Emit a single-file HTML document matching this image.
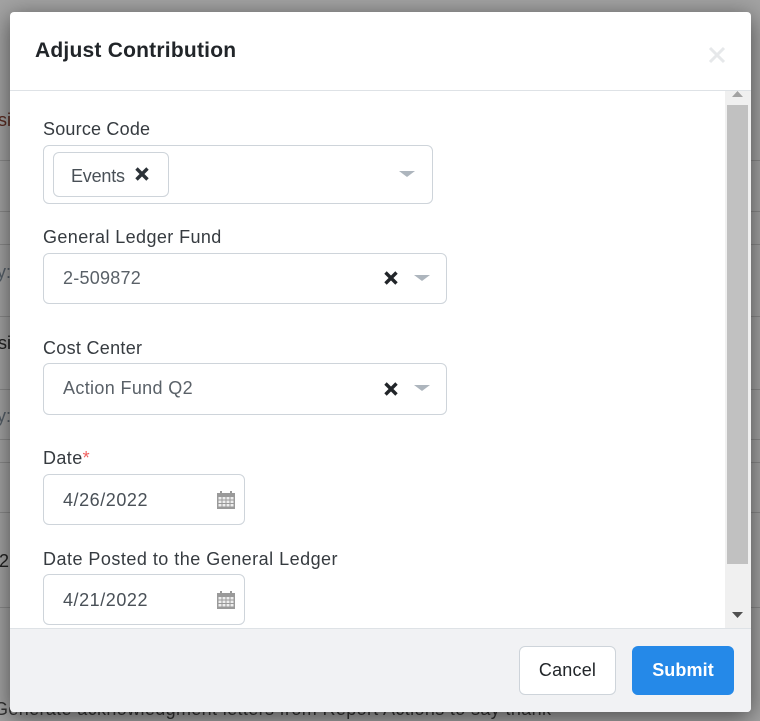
<!DOCTYPE html>
<html><head><meta charset="utf-8">
<style>
html,body{margin:0;padding:0}
body{width:760px;height:721px;overflow:hidden;position:relative;background:#a3a3a3;font-family:"Liberation Sans",sans-serif;color:#363b40}
.a{position:absolute;white-space:nowrap}
.line{position:absolute;left:0;width:760px;height:1px;background:#8b8b8b}
#modal{position:absolute;left:10px;top:12px;width:741px;height:700px;background:#fff;border-radius:4px;box-shadow:0 5px 24px rgba(0,0,0,.55);overflow:hidden}
.box{position:absolute;background:#fff;border:1px solid #ced4da;border-radius:6px;box-sizing:border-box}
.lbl{position:absolute;left:43px;font-size:18px;line-height:22px;white-space:nowrap;color:#363b40;letter-spacing:.4px}
.val{position:absolute;font-size:18px;line-height:22px;white-space:nowrap;color:#495057}
</style></head>
<body>
<div class="line" style="top:160px"></div>
<div class="line" style="top:211px"></div>
<div class="line" style="top:244px"></div>
<div class="line" style="top:316px"></div>
<div class="line" style="top:389px"></div>
<div class="line" style="top:439px"></div>
<div class="line" style="top:462px"></div>
<div class="line" style="top:512px"></div>
<div class="line" style="top:607px"></div>
<div class="a" style="left:-2px;top:110px;font-size:18px;color:#5a2a20">si</div>
<div class="a" style="left:-3px;top:262px;font-size:18px;color:#555f68">y:</div>
<div class="a" style="left:-2px;top:333px;font-size:18px;color:#222">si</div>
<div class="a" style="left:-3px;top:406px;font-size:18px;color:#555f68">y:</div>
<div class="a" style="left:-11px;top:551px;font-size:18px;color:#222">02</div>
<div class="a" style="left:-6px;top:699px;font-size:18px;color:#333;letter-spacing:.36px">Generate acknowledgment letters from Report Actions to say thank</div>

<div id="modal"></div>
<div class="a" style="left:10px;top:12px;width:741px;height:79px;border-bottom:1px solid #dee2e6;box-sizing:border-box"></div>
<div class="a" style="left:35px;top:38px;font-size:21px;line-height:26px;font-weight:bold;color:#212529;letter-spacing:.22px">Adjust Contribution</div>
<svg class="a" style="left:708px;top:46px" width="18" height="18" viewBox="0 0 18 18"><path d="M2 2L16 16M16 2L2 16" stroke="#e6e8ea" stroke-width="3"/></svg>

<div class="a" style="left:725px;top:91px;width:26px;height:537px;background:#f0f0f0"></div>
<div class="a" style="left:727px;top:105px;width:21px;height:459px;background:#c1c1c1"></div>
<svg class="a" style="left:732px;top:90px" width="12" height="8"><path d="M0 7L5.5 1L11 7Z" fill="#a3a3a3"/></svg>
<svg class="a" style="left:732px;top:611px" width="12" height="8"><path d="M0 1H11L5.5 7Z" fill="#505050"/></svg>

<div class="lbl" style="top:118px;letter-spacing:.2px">Source Code</div>
<div class="box" style="left:43px;top:145px;width:390px;height:59px"></div>
<div class="box" style="left:53px;top:152px;width:116px;height:45px"></div>
<div class="val" style="left:71px;top:165px;letter-spacing:-.2px">Events</div>
<svg class="a" style="left:134px;top:166px" width="16" height="16"><path d="M2.5 2.5L13.5 13.5M13.5 2.5L2.5 13.5" stroke="#2c3238" stroke-width="3.4"/></svg>
<svg class="a" style="left:399px;top:170px" width="16" height="8"><path d="M0 1H16L8 7Z" fill="#adb5bd"/></svg>

<div class="lbl" style="top:226px">General Ledger Fund</div>
<div class="box" style="left:43px;top:253px;width:404px;height:51px"></div>
<div class="val" style="left:63px;top:267px;color:#5a6168;letter-spacing:.25px">2-509872</div>
<svg class="a" style="left:383px;top:270px" width="16" height="16"><path d="M2.5 2.5L13.5 13.5M13.5 2.5L2.5 13.5" stroke="#212529" stroke-width="3.4"/></svg>
<svg class="a" style="left:414px;top:274px" width="16" height="8"><path d="M0 1H16L8 7Z" fill="#adb5bd"/></svg>

<div class="lbl" style="top:337px;letter-spacing:.3px">Cost Center</div>
<div class="box" style="left:43px;top:363px;width:404px;height:52px"></div>
<div class="val" style="left:63px;top:377px;color:#5a6168;letter-spacing:.35px">Action Fund Q2</div>
<svg class="a" style="left:383px;top:381px" width="16" height="16"><path d="M2.5 2.5L13.5 13.5M13.5 2.5L2.5 13.5" stroke="#212529" stroke-width="3.4"/></svg>
<svg class="a" style="left:414px;top:384px" width="16" height="8"><path d="M0 1H16L8 7Z" fill="#adb5bd"/></svg>

<div class="lbl" style="top:447px">Date<span style="color:#f0605f">*</span></div>
<div class="box" style="left:43px;top:474px;width:202px;height:51px"></div>
<div class="val" style="left:63px;top:489px;letter-spacing:.55px">4/26/2022</div>
<svg class="a" style="left:217px;top:490px" width="18" height="19" viewBox="0 0 18 19"><path d="M0 3H3V1H5V3H13V1H15V3H18V19H0Z" fill="#9a9a9a"/><path d="M1.5 7h3v2.5h-3zM5.5 7h3v2.5h-3zM9.5 7h3v2.5h-3zM13.5 7h3v2.5h-3zM1.5 10.5h3v2.5h-3zM5.5 10.5h3v2.5h-3zM9.5 10.5h3v2.5h-3zM13.5 10.5h3v2.5h-3zM1.5 14h3v2.5h-3zM5.5 14h3v2.5h-3zM9.5 14h3v2.5h-3zM13.5 14h3v2.5h-3z" fill="#eee"/></svg>

<div class="lbl" style="top:548px;letter-spacing:.48px">Date Posted to the General Ledger</div>
<div class="box" style="left:43px;top:574px;width:202px;height:51px"></div>
<div class="val" style="left:63px;top:589px;letter-spacing:.55px">4/21/2022</div>
<svg class="a" style="left:217px;top:590px" width="18" height="19" viewBox="0 0 18 19"><path d="M0 3H3V1H5V3H13V1H15V3H18V19H0Z" fill="#9a9a9a"/><path d="M1.5 7h3v2.5h-3zM5.5 7h3v2.5h-3zM9.5 7h3v2.5h-3zM13.5 7h3v2.5h-3zM1.5 10.5h3v2.5h-3zM5.5 10.5h3v2.5h-3zM9.5 10.5h3v2.5h-3zM13.5 10.5h3v2.5h-3zM1.5 14h3v2.5h-3zM5.5 14h3v2.5h-3zM9.5 14h3v2.5h-3zM13.5 14h3v2.5h-3z" fill="#eee"/></svg>

<div class="a" style="left:10px;top:628px;width:741px;height:84px;background:#f1f2f4;border-top:1px solid #dee2e6;box-sizing:border-box;border-radius:0 0 4px 4px"></div>
<div class="box" style="left:519px;top:646px;width:97px;height:49px;line-height:47px;text-align:center;font-size:18px;color:#212529;letter-spacing:.2px">Cancel</div>
<div class="a" style="left:632px;top:646px;width:102px;height:49px;line-height:49px;text-align:center;font-size:18px;font-weight:bold;color:#fff;background:#2589e8;border-radius:6px;letter-spacing:.1px">Submit</div>
</body></html>
